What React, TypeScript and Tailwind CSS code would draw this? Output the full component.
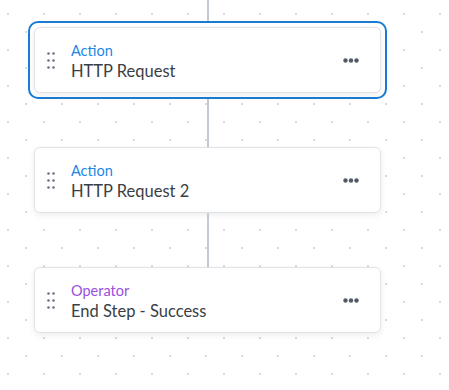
type Step = { kind: string; title: string; selected?: boolean }

const STEPS: Step[] = [
  { kind: 'Action', title: 'HTTP Request', selected: true },
  { kind: 'Action', title: 'HTTP Request 2' },
  { kind: 'Operator', title: 'End Step - Success' },
]

function DotGrid() {
  return (
    <svg className="absolute inset-0" width="449" height="390">
      <defs>
        <pattern id="dots" width="36" height="36" patternUnits="userSpaceOnUse" x="0" y="0">
          <rect x="7" y="13" width="2" height="2" fill="#d9d9d9" />
          <rect x="25" y="31" width="2" height="2" fill="#d9d9d9" />
        </pattern>
      </defs>
      <rect width="449" height="390" fill="url(#dots)" />
    </svg>
  )
}

function Handle() {
  return (
    <svg width="8" height="17" viewBox="0 0 8 17" className="shrink-0">
      {[1.5, 8.5, 15.5].map(y => (
        <g key={y} fill="#6b7280">
          <circle cx="1.5" cy={y} r="1.3" />
          <circle cx="6.5" cy={y} r="1.3" />
        </g>
      ))}
    </svg>
  )
}

function Kebab() {
  return (
    <svg width="16" height="5" viewBox="0 0 16 5" className="shrink-0">
      <g fill="#525a66">
        <circle cx="2.5" cy="2.5" r="2.2" />
        <circle cx="8" cy="2.5" r="2.2" />
        <circle cx="13.5" cy="2.5" r="2.2" />
      </g>
    </svg>
  )
}

function StepCard({ step }: { step: Step }) {
  const labelColor = step.kind === 'Operator' ? 'text-[#9b4fdc]' : 'text-[#1e88e5]'
  return (
    <div className="h-[66px] w-[347px] flex items-center pl-3 pr-[21px] bg-white border border-[#dfe3e8] rounded-md shadow-[0_2px_6px_rgba(15,23,42,0.08)]">
      <Handle />
      <div className="flex-1 ml-4 pt-[3px] flex flex-col">
        <span className={`text-[14.5px] leading-[19px] ${labelColor}`}>{step.kind}</span>
        <span className="text-[16.5px] leading-[22px] text-[#3a3f46]">{step.title}</span>
      </div>
      <Kebab />
    </div>
  )
}

function Line({ h }: { h: string }) {
  return <div className={`w-[2px] mx-auto bg-[#c3c9d1] ${h}`} />
}

export default function App() {
  return (
    <div className="relative w-[449px] h-[390px] overflow-hidden bg-white" style={{ fontFamily: 'Lato, "Noto Sans", sans-serif' }}>
      <DotGrid />
      <div className="relative ml-[34px] w-[347px] flex flex-col">
        <Line h="h-[21px]" />
        <div className="-mx-[6px] p-1 border-2 border-[#1a7bd6] rounded-[10px]">
          <StepCard step={STEPS[0]} />
        </div>
        <Line h="h-[48px]" />
        <StepCard step={STEPS[1]} />
        <Line h="h-[54px]" />
        <StepCard step={STEPS[2]} />
      </div>
    </div>
  )
}
